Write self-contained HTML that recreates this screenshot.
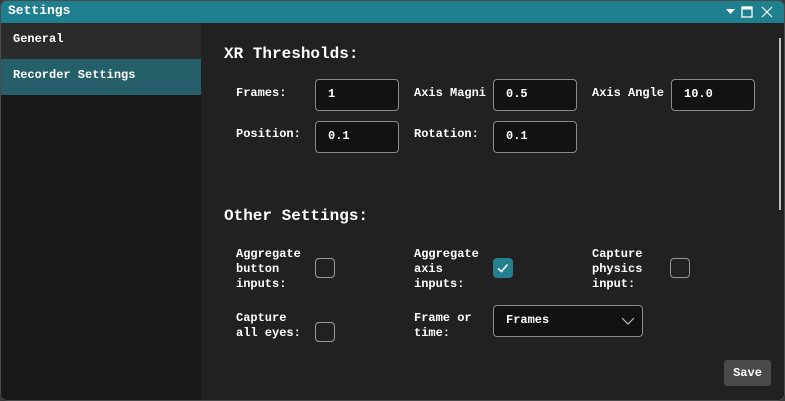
<!DOCTYPE html>
<html><head><style>
*{margin:0;padding:0;box-sizing:border-box}
body{width:785px;height:401px;background:#3a3a3a;overflow:hidden;font-family:"Liberation Mono",monospace;font-weight:bold;color:#fff;font-size:12px}
.win{position:absolute;left:0;top:0;width:785px;height:401px;border-radius:7px;overflow:hidden;background:#212121}
.edge{position:absolute;left:0;top:0;width:785px;height:401px;border-radius:7px;box-shadow:inset 0 0 0 1px #4a4a4a;pointer-events:none}
.title{position:absolute;left:0;top:0;width:785px;height:23px;background:#1e7f8e}
.title span{position:absolute;left:8px;top:3px;font-size:13px}
.side{position:absolute;left:0;top:23px;width:201px;height:378px;background:#181818}
.item{height:36px;line-height:32px;padding-left:13px}
.abs{position:absolute}
.lbl{position:absolute;line-height:15px}
.inp{position:absolute;background:#121212;border:1px solid #8a8a8a;border-radius:4px;height:32px;width:84px;padding-left:12px;line-height:28px}
.cb{position:absolute;width:20px;height:20px;border:1px solid #9a9a9a;border-radius:4px}
h2{position:absolute;font-size:16px;font-weight:bold}
</style></head><body>
<div class="win">
<div class="title"><span>Settings</span>
<svg class="abs" style="left:726px;top:9px" width="10" height="6"><path d="M0 0H9L4.5 5Z" fill="#fff"/></svg>
<svg class="abs" style="left:741px;top:6px" width="12" height="12"><rect x="1" y="1" width="10" height="10" fill="none" stroke="#fff" stroke-width="1.3"/><rect x="1" y="1" width="10" height="2.5" fill="#fff"/></svg>
<svg class="abs" style="left:761px;top:6px" width="12" height="12"><path d="M1 1L11 11M11 1L1 11" stroke="#fff" stroke-width="1.2"/></svg>
</div>
<div class="side">
<div class="item" style="background:#2b2b2b">General</div>
<div class="item" style="background:#255f6a">Recorder Settings</div>
</div>
<div class="abs" style="left:779px;top:38px;width:2px;height:172px;background:#bbb"></div>
<h2 style="left:224px;top:45px">XR Thresholds:</h2>
<div class="lbl" style="left:236px;top:86px">Frames:</div>
<div class="inp" style="left:315px;top:79px">1</div>
<div class="lbl" style="left:414px;top:86px">Axis Magni</div>
<div class="inp" style="left:493px;top:79px">0.5</div>
<div class="lbl" style="left:592px;top:86px">Axis Angle</div>
<div class="inp" style="left:671px;top:79px">10.0</div>
<div class="lbl" style="left:236px;top:127px">Position:</div>
<div class="inp" style="left:315px;top:121px">0.1</div>
<div class="lbl" style="left:414px;top:127px">Rotation:</div>
<div class="inp" style="left:493px;top:121px">0.1</div>
<h2 style="left:224px;top:207px">Other Settings:</h2>
<div class="lbl" style="left:236px;top:247px">Aggregate<br>button<br>inputs:</div>
<div class="cb" style="left:315px;top:258px"></div>
<div class="lbl" style="left:414px;top:247px">Aggregate<br>axis<br>inputs:</div>
<div class="cb" style="left:493px;top:258px;background:#23808f;border-color:#23808f"><svg width="18" height="18" style="position:absolute;left:0;top:0"><path d="M4 9.5L7.5 12.5L13.5 5.5" fill="none" stroke="#fff" stroke-width="1.6"/></svg></div>
<div class="lbl" style="left:592px;top:247px">Capture<br>physics<br>input:</div>
<div class="cb" style="left:670px;top:258px"></div>
<div class="lbl" style="left:236px;top:311px">Capture<br>all eyes:</div>
<div class="cb" style="left:315px;top:322px"></div>
<div class="lbl" style="left:414px;top:311px">Frame or<br>time:</div>
<div class="inp" style="left:493px;top:305px;width:150px;height:32px">Frames
<svg class="abs" style="left:127px;top:11px" width="14" height="8"><path d="M1 1L7 7L13 1" fill="none" stroke="#bbb" stroke-width="1.2"/></svg></div>
<div class="abs" style="left:724px;top:360px;width:47px;height:26px;background:#4a4a4a;border-radius:3px;text-align:center;line-height:26px">Save</div>
<div class="edge"></div>
</div>
</body></html>
